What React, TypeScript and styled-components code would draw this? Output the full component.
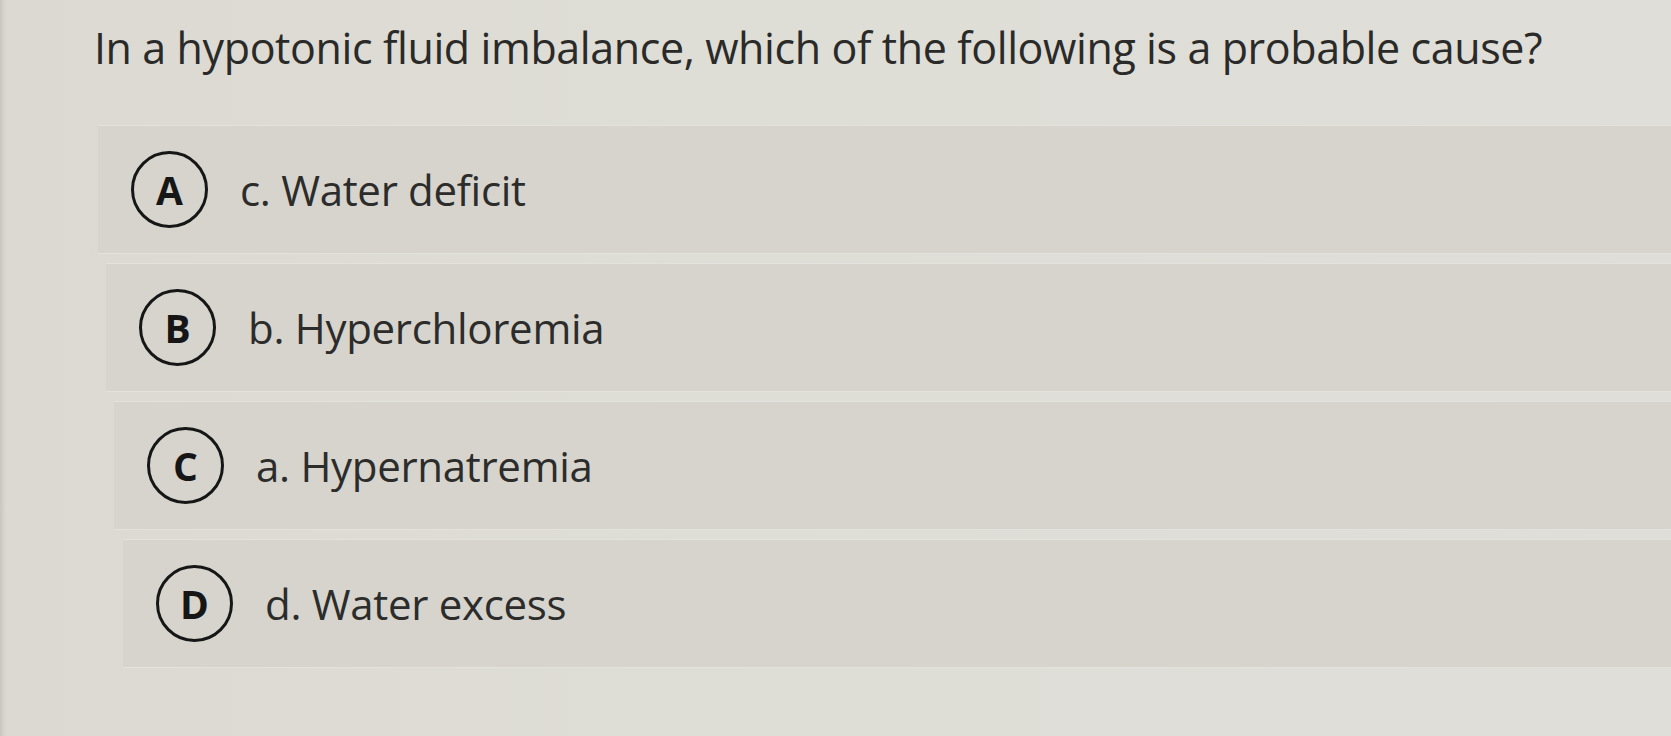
import styled, { createGlobalStyle } from 'styled-components';

const GlobalStyle = createGlobalStyle`
  html, body {
    margin: 0;
    padding: 0;
    background: #dddad3;
  }
  body {
    font-family: "Open Sans", "Noto Sans", sans-serif;
    color: #2b2b2a;
  }
`;

const Page = styled.main`
  width: 1671px;
  height: 736px;
  overflow: hidden;
  background: linear-gradient(90deg, #c9c7c1 0, #dcd9d2 6px, #deddd6 40%, #e0ded8 100%);
  padding-top: 20px;
  box-sizing: border-box;
`;

const Question = styled.h1`
  margin: 0 0 0 94px;
  font-size: 43px;
  font-weight: 400;
  line-height: 56px;
  letter-spacing: -0.4px;
  color: #2a2a29;
`;

const Options = styled.ul`
  list-style: none;
  margin: 50px 0 0;
  padding: 0;
  display: flex;
  flex-direction: column;
  gap: 11px;
`;

const OptionRow = styled.li<{ $indent: number }>`
  height: 127px;
  margin-left: ${(p) => p.$indent}px;
  display: flex;
  align-items: center;
  gap: 32px;
  padding-left: 33px;
  background: #d6d4cd;
  box-shadow: 0 -1px 0 #e4e2dc, 0 1px 0 #e4e2dc;
`;

const Badge = styled.span`
  flex: none;
  box-sizing: border-box;
  width: 77px;
  height: 77px;
  border: 3.5px solid #161616;
  border-radius: 50%;
  display: flex;
  align-items: center;
  justify-content: center;
  font-size: 39px;
  font-weight: 700;
  line-height: 1;
  color: #161616;
`;

const OptionText = styled.span`
  font-size: 42px;
  font-weight: 400;
  letter-spacing: -0.3px;
  color: #2c2c2b;
`;

const options = [
  { key: 'A', text: 'c. Water deficit', indent: 98 },
  { key: 'B', text: 'b. Hyperchloremia', indent: 106 },
  { key: 'C', text: 'a. Hypernatremia', indent: 114 },
  { key: 'D', text: 'd. Water excess', indent: 123 },
];

export default function App() {
  return (
    <Page>
      <GlobalStyle />
      <Question>In a hypotonic fluid imbalance, which of the following is a probable cause?</Question>
      <Options>
        {options.map((o) => (
          <OptionRow key={o.key} $indent={o.indent}>
            <Badge>{o.key}</Badge>
            <OptionText>{o.text}</OptionText>
          </OptionRow>
        ))}
      </Options>
    </Page>
  );
}
